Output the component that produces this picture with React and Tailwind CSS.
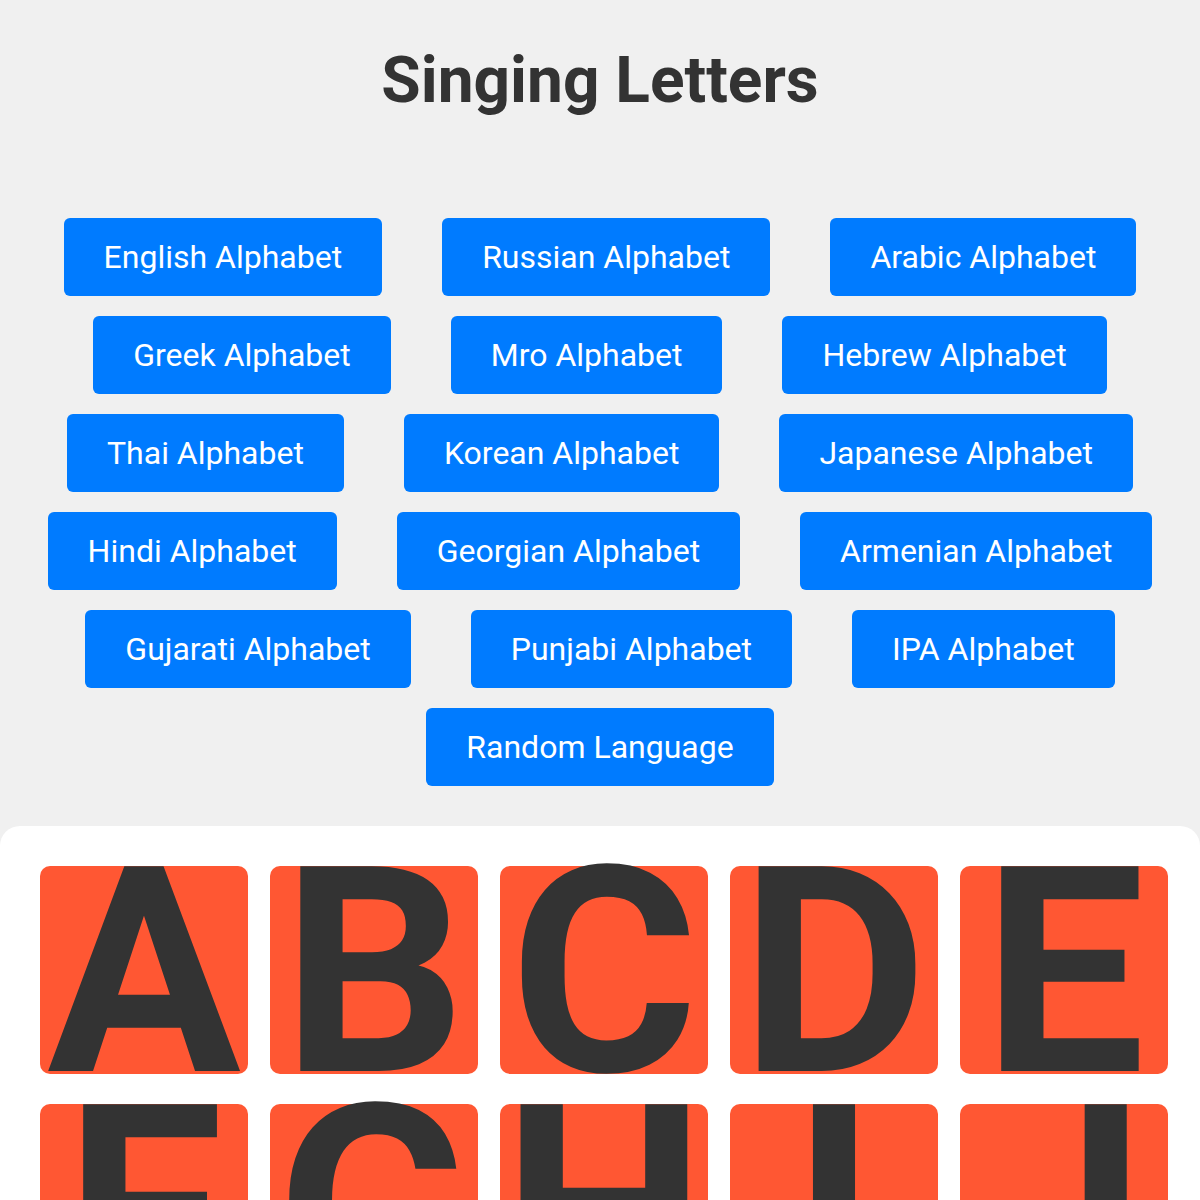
import React from "react";

const languages = [
  "English Alphabet",
  "Russian Alphabet",
  "Arabic Alphabet",
  "Greek Alphabet",
  "Mro Alphabet",
  "Hebrew Alphabet",
  "Thai Alphabet",
  "Korean Alphabet",
  "Japanese Alphabet",
  "Hindi Alphabet",
  "Georgian Alphabet",
  "Armenian Alphabet",
  "Gujarati Alphabet",
  "Punjabi Alphabet",
  "IPA Alphabet",
  "Random Language",
];

const letters = "ABCDEFGHIJKLMNOPQRSTUVWXYZ".split("");

export default function App() {
  return (
    <div className="min-h-screen bg-[#f0f0f0] pt-[43px] font-['Roboto',sans-serif] text-[#333]">
      <h1 className="text-center text-[64px] font-bold leading-[normal]">
        Singing Letters
      </h1>
      <div className="mt-[90px] flex flex-wrap justify-center">
        {languages.map((l) => (
          <button
            key={l}
            className="mx-[30px] my-[10px] rounded-[6px] bg-[#007bff] px-10 py-5 text-[32px] leading-[normal] text-white"
          >
            {l}
          </button>
        ))}
      </div>
      <div className="mt-[30px] rounded-t-[20px] bg-white pt-10 pl-10 pb-10">
        <div className="grid grid-cols-[repeat(5,208px)] gap-x-[22px] gap-y-[30px]">
          {letters.map((c) => (
            <div
              key={c}
              className="flex h-[208px] w-[208px] items-center justify-center rounded-[10px] bg-[#ff5733] pt-1 text-[288px] font-bold leading-[normal] text-[#333]"
            >
              {c}
            </div>
          ))}
        </div>
      </div>
    </div>
  );
}
